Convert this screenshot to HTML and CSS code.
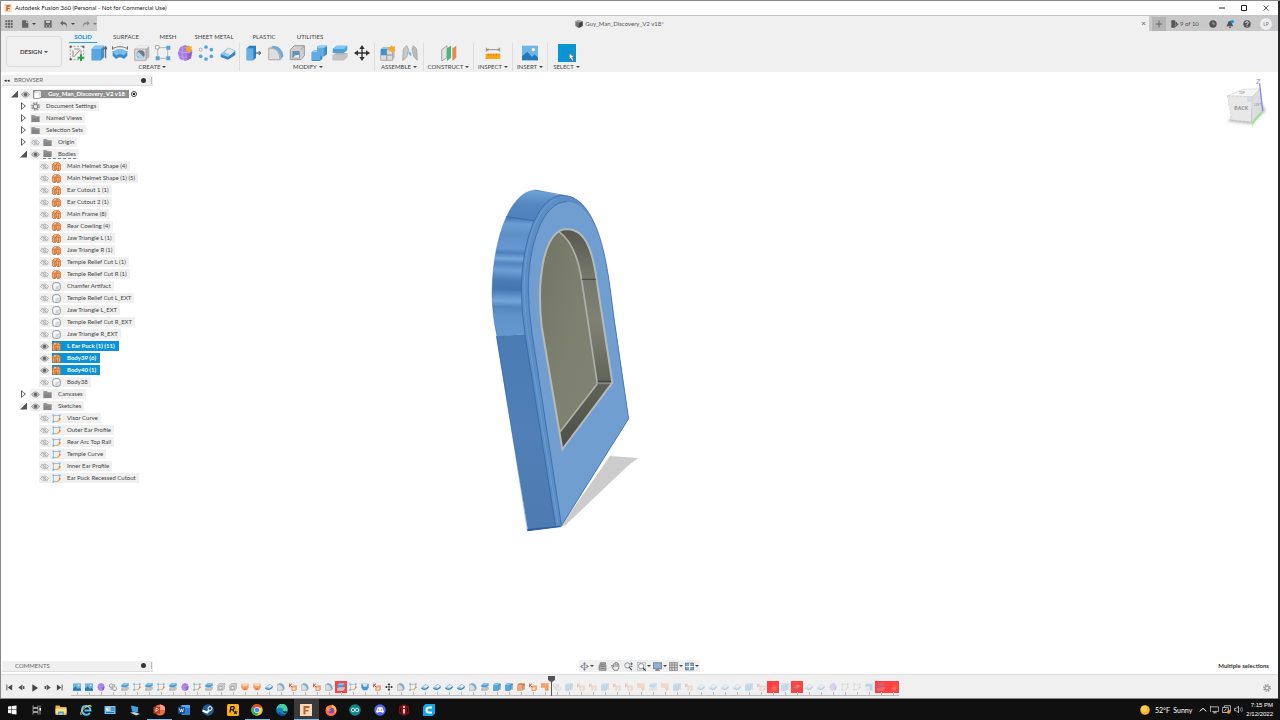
FILE: index.html
```html
<!DOCTYPE html>
<html lang="en">
<head>
<meta charset="utf-8">
<title>Autodesk Fusion 360</title>
<link rel="stylesheet" href="styles.css">
</head>
<body>
<svg class="defs" aria-hidden="true">
<defs>
<symbol id="eye" viewBox="0 0 24 24"><path d="M1 12q11-14 22 0q-11 14-22 0z" fill="#c5c5c5" stroke="#888" stroke-width="2"/><circle cx="12" cy="12" r="4.500" fill="#666"/></symbol>
<symbol id="eyeoff" viewBox="0 0 24 24"><path d="M1 12q11-13 22 0q-11 13-22 0z" fill="#eee" stroke="#aaa" stroke-width="2"/><circle cx="12" cy="12" r="3.500" fill="none" stroke="#aaa" stroke-width="2"/><path d="M3 5l18 14" stroke="#aaa" stroke-width="2"/></symbol>
<symbol id="folder" viewBox="0 0 24 24"><path d="M1 3h9l3 3h10v15H1z" fill="#858585"/><path d="M1 8h22" stroke="#b5b5b5" stroke-width="1.500"/></symbol>
<symbol id="gear" viewBox="0 0 24 24"><circle cx="12" cy="12" r="9.500" fill="none" stroke="#888" stroke-width="4" stroke-dasharray="4 3.460"/><circle cx="12" cy="12" r="6" fill="#eee" stroke="#888" stroke-width="3"/></symbol>
<symbol id="box" viewBox="0 0 24 24"><path d="M2 6l5-4h15v16l-5 5H2z" fill="#fff" stroke="#777" stroke-width="2"/><path d="M3 7h14v15M17 7l5-5" fill="none" stroke="#bbb" stroke-width="1.500"/></symbol>
<symbol id="mesh" viewBox="0 0 24 24"><path d="M6 2h12l5 5v13l-4 3h-5l-2-7-3 7H4l-3-4V7z" fill="#f5a566" stroke="#bb6a30" stroke-width="2"/><path d="M3 8l8 1 3-6M11 9v8M14 9h7M7 10v11M17 10v11" stroke="#a9581f" stroke-width="1.500" fill="none"/><path d="M5 5l5-1M14 13h3" stroke="#ffe0bd" stroke-width="2"/></symbol>
<symbol id="solid" viewBox="0 0 24 24"><rect x="2" y="2" width="20" height="20" rx="6" fill="#fff" stroke="#858b95" stroke-width="2.500"/><path d="M12 9h8v9l-3 3h-8V12z" fill="#d4d7dc"/></symbol>
<symbol id="sketch" viewBox="0 0 24 24"><path d="M4 4h16v14M4 4v16h10" fill="none" stroke="#8a9aa8" stroke-width="1.600"/><path d="M1 1h5v5H1zM18 1h5v5h-5zM1 18h5v5H1z" fill="#82b9e2"/><path d="M13 22l1-4 7-8 2 3-7 8z" fill="#f5ae32"/><path d="M19 12l2-2 2 3-2 2z" fill="#d95858"/></symbol>
<symbol id="pic" viewBox="0 0 24 24"><path d="M0 1h24v22H0z" fill="#70b5e7"/><circle cx="17" cy="7" r="2.500" fill="#fff3b6"/><path d="M0 17l8-7 7 8 4-4 5 5v4H0z" fill="#2479b8"/></symbol>
<symbol id="form" viewBox="0 0 24 24"><path d="M5 3l7-3 8 3 3 8-2 9-8 4-9-3-3-9z" fill="#a67de0"/><path d="M2 9q10 5 20 0M2 17q10 4 19 0M9 2q-3 10 1 21M18 3q1 10-2 20" stroke="#cbaef2" stroke-width="1" fill="none"/><path d="M16 13l6-3-1 10-6 3z" fill="#7447b8" opacity=".6"/></symbol>
<symbol id="link" viewBox="0 0 24 24"><path d="M1 5l7-3 4 5-3 6-7-1zM10 14l8-4 5 5-2 7-8 1z" fill="#e7e7e7" stroke="#858585" stroke-width="2"/><path d="M12 5h5v4M6 14v5h4" fill="none" stroke="#5c91ba" stroke-width="2"/></symbol>
<symbol id="split" viewBox="0 0 24 24"><path d="M1 6l6-5h16v6l-5 5H1z" fill="#4a9fdd"/><path d="M1 6l6-5h16l-5 5z" fill="#85c4ef"/><path d="M1 15l5-3h17v6l-5 5H1z" fill="#b5b5b5"/><path d="M1 15h17l5-3v6l-5 5H1z" fill="#c4c4c4"/></symbol>
<symbol id="shell" viewBox="0 0 24 24"><path d="M2 7l6-6h15v15l-5 6H2z" fill="#cfcfcf" stroke="#999" stroke-width="1.500"/><path d="M6 10h9v9H6z" fill="#f3f3f3" stroke="#888" stroke-width="2"/><path d="M18 7l5-6" stroke="#888"/></symbol>
<symbol id="patch" viewBox="0 0 24 24"><path d="M1 2h22v12l-5 8H6l-5-8z" fill="#f39c62"/><path d="M3 3h18l-3 7H7z" fill="#ffd8b9"/><path d="M9 15h6v6H9z" fill="#dd8149"/></symbol>
<symbol id="bpatch" viewBox="0 0 24 24"><path d="M1 2h22v12l-5 8H6l-5-8z" fill="#4596d3"/><path d="M4 3h16l-3 8H8z" fill="#d5e4ef"/></symbol>
<symbol id="plane" viewBox="0 0 24 24"><path d="M1 14L13 4l10 5v6L12 22 1 18z" fill="#3c83bd"/><path d="M1 14L13 4l10 5-11 9z" fill="#8cc8ef"/><path d="M7 11l6-6 9 4-7 6z" fill="#e2e8ec"/></symbol>
<symbol id="fillet" viewBox="0 0 24 24"><path d="M1 4l6-3q14 0 16 16l-4 6H1z" fill="#c5c5c5"/><path d="M7 1q14 0 16 16l-4 4q0-15-13-17z" fill="#66ace1"/><path d="M1 5h5q11 1 12 17H1z" fill="#dedede" stroke="#999"/></symbol>
<symbol id="remove" viewBox="0 0 24 24"><path d="M8 11l4-3h11v11l-4 4H8z" fill="#f7a873" stroke="#b98058"/><path d="M11 14h7v6h-7z" fill="#ffdfbf"/><path d="M2 2v11M2 8l7-6M4 7l6 6" stroke="#bb3a30" stroke-width="2.500"/></symbol>
<symbol id="ext" viewBox="0 0 24 24"><path d="M1 6l5-5h14v17l-5 5H1z" fill="#3e91cf"/><path d="M1 6l5-5h14l-5 5z" fill="#8cc7f0"/><path d="M1 6h14v17H1z" fill="#58a7df"/><path d="M22 20V3M19 7l3-5 2 5" fill="none" stroke="#555" stroke-width="1.500"/></symbol>
<symbol id="oext" viewBox="0 0 24 24"><path d="M1 6l5-5h14v17l-5 5H1z" fill="#d98245"/><path d="M1 6h14v17H1z" fill="#f5a775"/><path d="M22 20V3M19 7l3-5 2 5" fill="none" stroke="#555" stroke-width="1.500"/></symbol>
<symbol id="ell" viewBox="0 0 24 24"><path d="M0 1h23v22H12V14H0z" fill="#f79b61"/><path d="M3 14L12 5h11" stroke="#ffb488" stroke-width="2" fill="none"/></symbol>
<symbol id="move" viewBox="0 0 24 24"><path d="M12 2v20M2 12h20" stroke="#333" stroke-width="2"/><path d="M12 0l4 6H8zM12 24l-4-6h8zM0 12l6-4v8zM24 12l-6 4V8z" fill="#333"/></symbol>
<symbol id="scale" viewBox="0 0 24 24"><path d="M1 2h22v21h-9V11H1z" fill="#4b99cc"/><path d="M2 14h9v9H2z" fill="#aac6d8"/></symbol>
<symbol id="newsketch" viewBox="0 0 24 24"><path d="M2 2h20v14M2 2v20h13" fill="none" stroke="#888" stroke-dasharray="3 2"/><path d="M6 18V8M8 6h8M18 8v6M7 18l10-11" stroke="#777" fill="none" stroke-width="1.200"/><path d="M1 1h3v3H1zM20 1h3v3h-3zM1 20h3v3H1z" fill="#555"/><path d="M18 14v10M13 19h10" stroke="#24a34b" stroke-width="3"/></symbol>
<symbol id="revolve" viewBox="0 0 24 24"><path d="M1 9v7l5 5q6-5 12 0l5-5V9z" fill="#378bc9"/><path d="M1 10q11-9 22 0l-5 6q-6-5-12 0z" fill="#79bbea"/><path d="M2 5q10-5 20 0" stroke="#777" fill="none" stroke-width="1.500"/><path d="M1 2v5M23 2v5" stroke="#555" stroke-width="1.500"/></symbol>
<symbol id="hole" viewBox="0 0 24 24"><path d="M1 6l5-5h17v17l-5 5H1z" fill="#b5b5b5"/><path d="M1 6l5-5h17l-5 5z" fill="#eee"/><path d="M1 6h17v17H1z" fill="#dadada" stroke="#999"/><circle cx="10" cy="14" r="6" fill="#777"/><path d="M6 10a6 6 0 0 0 9 8z" fill="#a9d6f2"/></symbol>
<symbol id="pattern" viewBox="0 0 24 24"><path d="M5 4h14v16M4 4v16h15" fill="none" stroke="#999"/><path d="M1 1h5v5H1z" fill="#fff" stroke="#888"/><path d="M17 1h6v6h-6zM1 17h6v6H1zM17 17h6v6h-6z" fill="#55a5dd"/></symbol>
<symbol id="circ" viewBox="0 0 24 24"><g fill="#55a5dd"><circle cx="12" cy="3" r="2.800"/><circle cx="20" cy="7" r="2.800"/><circle cx="20" cy="17" r="2.800"/><circle cx="12" cy="21" r="2.800"/><circle cx="4" cy="17" r="2.800"/></g><circle cx="4" cy="7" r="2.300" fill="#fff" stroke="#888"/></symbol>
<symbol id="press" viewBox="0 0 24 24"><path d="M1 5l4-4h10v18l-4 4H1z" fill="#2d83c0"/><path d="M1 5h10v18H1z" fill="#69b0e2"/><path d="M14 12h8M19 9l3 3-3 3" fill="none" stroke="#444" stroke-width="1.500"/></symbol>
<symbol id="combine" viewBox="0 0 24 24"><path d="M9 3l3-2h12v13l-4 3h-3v4l-4 3H1V11l3-3h5z" fill="#368bcd"/><path d="M9 3l3-2h12l-4 3v13h-6v6H1V11h8z" fill="#5fabdf"/><path d="M9 4l3-3h12l-4 3zM1 11l3-3h5v3z" fill="#9bd0f3"/></symbol>
<symbol id="newcomp" viewBox="0 0 24 24"><path d="M1 7l4-4h17v16l-4 4H1z" fill="#bbb"/><path d="M1 15h9v8H1zM10 15h9v8h-9zM10 7h9v8h-9z" fill="#ddd" stroke="#999"/><path d="M1 6h9v9H1z" fill="#3b91d1"/><path d="M1 6l4-3h9l-4 3z" fill="#8cc7f0"/><path d="M18 0l1 3 4-1-2 4 3 2-4 1-1 3-3-3-3 1 1-4-3-3h4z" fill="#f5a91b"/></symbol>
<symbol id="joint" viewBox="0 0 24 24"><path d="M2 6l5-5 3 6-3 11-5 5H1z" fill="#c9c9c9" stroke="#999"/><path d="M17 1l5 5 1 17-5-5-3-11z" fill="#bdbdbd" stroke="#999"/><path d="M10 9l4 3v5l-4-3z" fill="#7ab8e2"/></symbol>
<symbol id="construct" viewBox="0 0 24 24"><path d="M1 7l8-6v18l-8 5z" fill="#e1e1e1" stroke="#888"/><path d="M9 5l6-4v18l-6 5z" fill="#43b67b"/><path d="M17 5l6-4v18l-6 5z" fill="#e28b55"/></symbol>
<symbol id="inspect" viewBox="0 0 24 24"><path d="M2 4v6M22 4v6M3 7h18M5 5L3 7l2 2M19 5l2 2-2 2" stroke="#666" fill="none"/><path d="M1 13h22v8H1z" fill="#f5a719"/><path d="M5 13v3M9 13v3M13 13v3M17 13v3" stroke="#b88218"/></symbol>
<symbol id="select" viewBox="0 0 24 24"><path d="M0 0h24v24H0z" fill="#0b93d7"/><path d="M3 3h17v14H3z" fill="none" stroke="#19a8ae" stroke-dasharray="2 2"/><path d="M15 12v9l2-2 2 4 2-1-2-4h3z" fill="#fff" stroke="#444" stroke-width=".7"/></symbol>
<symbol id="menu" viewBox="0 0 24 24"><path d="M1 1h6v6H1zM9 1h6v6H9zM17 1h6v6h-6zM1 9h6v6H1zM9 9h6v6H9zM17 9h6v6h-6zM1 17h6v6H1zM9 17h6v6H9zM17 17h6v6h-6z" fill="#666"/></symbol>
<symbol id="file" viewBox="0 0 24 24"><path d="M3 1h12v7h7v15H3zM17 1l5 5h-5z" fill="#666"/></symbol>
<symbol id="save" viewBox="0 0 24 24"><path d="M1 1h22v22H1z" fill="#666"/><path d="M6 2h12v7H6zM6 14h12v8H6z" fill="#c9c9c9"/><path d="M8 15h8v6H8z" fill="#666"/></symbol>
<symbol id="undo" viewBox="0 0 24 24"><path d="M9 2L0 9l9 8v-5q9-1 11 10Q23 6 9 7z" fill="#666"/></symbol>
<symbol id="cube" viewBox="0 0 24 24"><path d="M1 4l9-3 13 3v14l-12 6L1 18z" fill="#777"/><path d="M11 8l12-4v14l-12 6z" fill="#444"/><path d="M1 4l9-3 13 3-12 4z" fill="#aaa"/></symbol>
<symbol id="clock" viewBox="0 0 24 24"><circle cx="12" cy="12" r="11" fill="#555"/><path d="M12 5v7h6" stroke="#ccc" stroke-width="2" fill="none"/></symbol>
<symbol id="bell" viewBox="0 0 24 24"><path d="M12 2q7 1 6 9l4 8H1l4-8q0-8 7-9zM9 20h6v3H9z" fill="#555"/><circle cx="19" cy="5" r="5" fill="#1399df"/></symbol>
<symbol id="help" viewBox="0 0 24 24"><circle cx="12" cy="12" r="11" fill="#555"/><path d="M8 9q0-4 4-4t4 4q0 2-4 4v2M12 17v3" fill="none" stroke="#ddd" stroke-width="3"/></symbol>
<symbol id="docs" viewBox="0 0 24 24"><path d="M1 1h11v22H1zM13 3l9 9-9 9" fill="#555"/><path d="M11 20l9-10 3 3-9 9z" fill="#555" stroke="#ccc"/></symbol>
<symbol id="first" viewBox="0 0 24 24"><path d="M3 2v20" stroke="#444" stroke-width="3"/><path d="M21 2v20L6 12z" fill="#444"/></symbol>
<symbol id="prev" viewBox="0 0 24 24"><path d="M15 2v20L1 12zM17 7h5v10h-5z" fill="#555"/></symbol>
<symbol id="play" viewBox="0 0 24 24"><path d="M4 1v22l17-11z" fill="#444"/></symbol>
<symbol id="orbit" viewBox="0 0 24 24"><path d="M12 0l4 6H8zM12 24l-4-6h8zM0 12l6-4v8zM24 12l-6 4V8z" fill="#778"/><ellipse cx="12" cy="12" rx="8" ry="4" fill="none" stroke="#889" stroke-width="2"/><path d="M12 4v16" stroke="#889" stroke-width="2"/></symbol>
<symbol id="look" viewBox="0 0 24 24"><path d="M3 8h18v14H3zM6 2h14v4H6z" fill="#bbb" stroke="#666" stroke-width="2"/><path d="M6 12h12M6 17h12" stroke="#666" stroke-width="2"/></symbol>
<symbol id="hand" viewBox="0 0 24 24"><path d="M7 14L4 9q-4-1-2 3l6 10h10l3-8V6q-2-2-3 1V3q-3-2-4 0V1q-3-1-3 2v3q-3-4-4 0z" fill="#eee" stroke="#666" stroke-width="2"/><path d="M11 6v7M14 5v8M18 7v6" stroke="#666" stroke-width="1.500"/></symbol>
<symbol id="zoomer" viewBox="0 0 24 24"><circle cx="9" cy="9" r="7" fill="#eaf1f7" stroke="#777" stroke-width="2"/><path d="M14 14l7 8" stroke="#333" stroke-width="3"/><path d="M17 5h7M20 1v8M17 12h6" stroke="#555" stroke-width="2"/></symbol>
<symbol id="fit" viewBox="0 0 24 24"><path d="M1 1h22v22H1z" fill="#e3e7ea" stroke="#888" stroke-width="1.500" stroke-dasharray="4 2"/><circle cx="11" cy="11" r="7" fill="#f7fbff" stroke="#777" stroke-width="2"/><path d="M16 16l7 7" stroke="#333" stroke-width="3"/></symbol>
<symbol id="display" viewBox="0 0 24 24"><path d="M1 2h22v16H1z" fill="#8eb4d6" stroke="#667" stroke-width="2"/><path d="M8 19h8l3 4H5z" fill="#777"/></symbol>
<symbol id="grid" viewBox="0 0 24 24"><path d="M1 1h22v22H1z" fill="#ddd"/><path d="M2 1v22M8 1v22M15 1v22M22 1v22M1 2h22M1 8h22M1 15h22M1 22h22" stroke="#777" stroke-width="2"/></symbol>
<symbol id="views" viewBox="0 0 24 24"><path d="M1 3h22v18H1z" fill="#83abd0" stroke="#567" stroke-width="2"/><path d="M12 3v18M1 12h22" stroke="#fff" stroke-width="2.500"/></symbol>
</defs>
</svg>

<div class="screen">
<div class="app">
<header class="titlebar">
<svg class="i8" viewBox="0 0 24 24"><path d="M1 0h22v24H1z" fill="#f8d3b5"/><path d="M7 4h12v4h-8v4h6v3h-6v6H7z" fill="#b9622b"/></svg>
<span>Autodesk Fusion 360 (Personal - Not for Commercial Use)</span>
<div class="winbtns">
<button aria-label="Minimize"><svg class="i6" viewBox="0 0 12 12"><path d="M0 6h12" stroke="#222" stroke-width="2"/></svg></button>
<button aria-label="Maximize"><svg class="i6" viewBox="0 0 12 12"><path d="M1 1h10v10H1z" fill="none" stroke="#222" stroke-width="2"/></svg></button>
<button aria-label="Close"><svg class="i6" viewBox="0 0 12 12"><path d="M1 1l10 10M11 1L1 11" stroke="#222" stroke-width="1.500"/></svg></button>
</div>
</header>

<div class="docbar">
<div class="quick">
<button aria-label="Data panel"><svg class="i8"><use href="#menu"/></svg></button>
<button class="car" aria-label="File"><svg class="i8"><use href="#file"/></svg></button>
<button aria-label="Save"><svg class="i8"><use href="#save"/></svg></button>
<button class="car" aria-label="Undo"><svg class="i8"><use href="#undo"/></svg></button>
<button class="car dim" aria-label="Redo"><svg class="i8 flip"><use href="#undo"/></svg></button>
</div>
<div class="doctab"><svg class="i8"><use href="#cube"/></svg><span>Guy_Man_Discovery_V2 v18*</span><button class="closetab" aria-label="Close tab">×</button></div>
<div class="docright">
<button class="plus" aria-label="New tab"><svg class="i8" viewBox="0 0 24 24"><path d="M12 2v20M2 12h20" stroke="#666" stroke-width="3"/></svg></button>
<button class="quota"><svg class="i8"><use href="#docs"/></svg>9 of 10</button>
<button aria-label="Jobs"><svg class="i8"><use href="#clock"/></svg></button>
<button aria-label="Notifications"><svg class="i8"><use href="#bell"/></svg></button>
<button aria-label="Help"><svg class="i8"><use href="#help"/></svg></button>
<button class="avatar">LP</button>
</div>
</div>

<div class="ribbon">
<button class="workspace"><span class="drop">DESIGN</span></button>
<div class="tools">
<nav class="tabs">
<button class="on">SOLID</button><button>SURFACE</button><button>MESH</button><button class="wide">SHEET METAL</button><button class="wide">PLASTIC</button><button>UTILITIES</button>
</nav>
<div class="groups">
<section class="group create"><div class="icons"><svg><use href="#newsketch"/></svg><svg><use href="#ext"/></svg><svg><use href="#revolve"/></svg><svg><use href="#hole"/></svg><svg><use href="#pattern"/></svg><svg viewBox="0 0 24 24"><use href="#form"/><path d="M18 0l1 3 4-1-2 4 3 2-4 1-1 3-3-3-3 1 1-4-3-3h4z" fill="#f5a91b"/></svg><svg><use href="#circ"/></svg><svg><use href="#plane"/></svg></div><button class="drop">CREATE</button></section>
<section class="group modify"><div class="icons"><svg><use href="#press"/></svg><svg><use href="#fillet"/></svg><svg viewBox="0 0 24 24"><use href="#shell"/><path d="M6 10h9v9H6z" fill="#4b9cd6"/><path d="M6 19h9v-4h-5z" fill="#eee"/></svg><svg><use href="#combine"/></svg><svg><use href="#split"/></svg><svg><use href="#move"/></svg></div><button class="drop">MODIFY</button></section>
<section class="group assemble"><div class="icons"><svg><use href="#newcomp"/></svg><svg><use href="#joint"/></svg></div><button class="drop">ASSEMBLE</button></section>
<section class="group construct"><div class="icons"><svg><use href="#construct"/></svg></div><button class="drop">CONSTRUCT</button></section>
<section class="group inspect"><div class="icons"><svg><use href="#inspect"/></svg></div><button class="drop">INSPECT</button></section>
<section class="group insert"><div class="icons"><svg><use href="#pic"/></svg></div><button class="drop">INSERT</button></section>
<section class="group select"><div class="icons big"><svg><use href="#select"/></svg></div><button class="drop">SELECT</button></section>
</div>
</div>
</div>

<main class="canvas">
<svg class="model" viewBox="0 0 540 1080">
<defs>
<linearGradient id="side" gradientUnits="userSpaceOnUse" x1="120" y1="30" x2="105" y2="468">
<stop offset="0" stop-color="#6fa2d6"/><stop offset=".1" stop-color="#5486be"/><stop offset=".2" stop-color="#4f82bc"/><stop offset=".23" stop-color="#6b9ed3"/><stop offset=".3" stop-color="#5d90c7"/><stop offset=".4" stop-color="#6598cf"/><stop offset=".43" stop-color="#4d80b9"/><stop offset=".47" stop-color="#78a9dc"/><stop offset=".5" stop-color="#5385be"/><stop offset=".55" stop-color="#6e9fd4"/><stop offset=".62" stop-color="#4a7bb4"/><stop offset=".68" stop-color="#4475ae"/><stop offset=".73" stop-color="#6296ce"/><stop offset=".76" stop-color="#74a6db"/><stop offset=".8" stop-color="#5385bd"/><stop offset=".86" stop-color="#5f93ca"/><stop offset="1" stop-color="#6598ce"/>
</linearGradient>
<linearGradient id="floor" x1="0" y1="0" x2="1" y2="1"><stop offset="0" stop-color="#727565"/><stop offset=".5" stop-color="#7d806f"/><stop offset="1" stop-color="#818472"/></linearGradient>
<linearGradient id="wall" x1="0" y1="0" x2="0" y2="1"><stop offset="0" stop-color="#56584f"/><stop offset=".2" stop-color="#74766a"/><stop offset=".42" stop-color="#7f8273"/><stop offset=".7" stop-color="#5f6256"/><stop offset="1" stop-color="#4d5047"/></linearGradient>
<linearGradient id="lower" x1="0" y1="0" x2="0" y2="1"><stop offset="0" stop-color="#4a7bb3"/><stop offset=".5" stop-color="#5080b7"/><stop offset="1" stop-color="#4b7bb0"/></linearGradient>
</defs>
<path d="M272 1040L420 828l85 6-32 24-187 178z" fill="#ccc"/>
<path d="M196 30C115 35 66 190 66 345q1 65 15 125l85-8 115-414z" fill="url(#side)"/>
<path d="M78 469l90-7 102 577-96 13z" fill="url(#lower)"/>
<path d="M281 46C205 44 155 180 154 330q1 75 12 140l91 570 17-2 202-322-44-302C420 318 415 280 404 228C380 115 337 48 281 46z" fill="#5b8ec5"/>
<path d="M290 65C220 65 175 190 175 330q1 60 11 130l88 574 202-318-46-320C420 318 415 280 404 228C380 125 342 66 290 65z" fill="#719ed0"/>
<g fill="none" stroke="#2d62a6" stroke-width="2">
<path d="M281 46C205 44 155 180 154 330q1 75 12 140l91 570M290 65C220 65 175 190 175 330q1 60 11 130l88 574"/>
<path d="M281 46C337 48 380 115 404 228c11 52 16 90 28 186l44 302-202 322-102 13M196 30l85 16M108 110l84 12"/>
<path d="M196 30C115 35 66 190 66 345q1 65 15 125l91 581" opacity=".55"/>
<path d="M256 58C200 85 162 190 163 330q2 75 10 130l91 570" stroke="#8ab1dd" opacity=".6"/>
</g>
<path d="M172 1047l98-10 5 4-103 13z" fill="#2d619f"/>
<path d="M290 148C350 146 370 225 380 300l47 308-150 200-8-48-54-320C200 300 220 180 270 152z" fill="url(#wall)"/>
<path d="M267 155c35 25 58 80 68 145l47 311-112 145-55-316C200 300 220 185 267 155z" fill="url(#floor)"/>
<path d="M267 155c35 25 58 80 68 145l47 311-112 145M382 611h43" fill="none" stroke="#aeb0aa" stroke-width="5"/>
<path d="M290 148C350 146 370 225 380 300l47 308-150 200-8-48-54-320C200 300 220 180 270 152q10-4 20-4z" fill="none" stroke="#b5b9b8" stroke-width="6"/>
<path d="M335 298h43M383 604h40M382 612h38" stroke="#252b35" stroke-width="2"/>
</svg>

<aside class="browser">
<div class="panelhead"><span class="rew">◂◂</span><span>BROWSER</span><button class="dot" aria-label="Display settings"></button><i></i></div>
<div class="tree">
<div class="row l0"><button class="tog open" aria-label="Collapse"></button><div class="pill"><svg><use href="#eye"/></svg><span class="rootname"><svg><use href="#box"/></svg><b>Guy_Man_Discovery_V2 v18</b></span></div><input type="radio" checked aria-label="Active component"></div>
<div class="row l1"><button class="tog" aria-label="Expand"></button><div class="pill"><svg><use href="#gear"/></svg><span>Document Settings</span></div></div>
<div class="row l1"><button class="tog" aria-label="Expand"></button><div class="pill"><svg><use href="#folder"/></svg><span>Named Views</span></div></div>
<div class="row l1"><button class="tog" aria-label="Expand"></button><div class="pill"><svg><use href="#folder"/></svg><span>Selection Sets</span></div></div>
<div class="row l1"><button class="tog" aria-label="Expand"></button><div class="pill"><svg><use href="#eyeoff"/></svg><svg><use href="#folder"/></svg><span>Origin</span></div></div>
<div class="row l1"><button class="tog open" aria-label="Collapse"></button><div class="pill"><svg><use href="#eye"/></svg><div class="bodies"><svg><use href="#folder"/></svg><span>Bodies</span></div></div></div>
<div class="row l2"><div class="pill"><svg><use href="#eyeoff"/></svg><svg><use href="#mesh"/></svg><span>Main Helmet Shape (4)</span></div></div>
<div class="row l2"><div class="pill"><svg><use href="#eyeoff"/></svg><svg><use href="#mesh"/></svg><span>Main Helmet Shape (1) (5)</span></div></div>
<div class="row l2"><div class="pill"><svg><use href="#eyeoff"/></svg><svg><use href="#mesh"/></svg><span>Ear Cutout 1 (1)</span></div></div>
<div class="row l2"><div class="pill"><svg><use href="#eyeoff"/></svg><svg><use href="#mesh"/></svg><span>Ear Cutout 2 (1)</span></div></div>
<div class="row l2"><div class="pill"><svg><use href="#eyeoff"/></svg><svg><use href="#mesh"/></svg><span>Main Frame (8)</span></div></div>
<div class="row l2"><div class="pill"><svg><use href="#eyeoff"/></svg><svg><use href="#mesh"/></svg><span>Rear Cowling (4)</span></div></div>
<div class="row l2"><div class="pill"><svg><use href="#eyeoff"/></svg><svg><use href="#mesh"/></svg><span>Jaw Triangle L (1)</span></div></div>
<div class="row l2"><div class="pill"><svg><use href="#eyeoff"/></svg><svg><use href="#mesh"/></svg><span>Jaw Triangle R (1)</span></div></div>
<div class="row l2"><div class="pill"><svg><use href="#eyeoff"/></svg><svg><use href="#mesh"/></svg><span>Temple Relief Cut L (1)</span></div></div>
<div class="row l2"><div class="pill"><svg><use href="#eyeoff"/></svg><svg><use href="#mesh"/></svg><span>Temple Relief Cut R (1)</span></div></div>
<div class="row l2"><div class="pill"><svg><use href="#eyeoff"/></svg><svg><use href="#solid"/></svg><span>Chamfer Artifact</span></div></div>
<div class="row l2"><div class="pill"><svg><use href="#eyeoff"/></svg><svg><use href="#solid"/></svg><span>Temple Relief Cut L_EXT</span></div></div>
<div class="row l2"><div class="pill"><svg><use href="#eyeoff"/></svg><svg><use href="#solid"/></svg><span>Jaw Triangle L_EXT</span></div></div>
<div class="row l2"><div class="pill"><svg><use href="#eyeoff"/></svg><svg><use href="#solid"/></svg><span>Temple Relief Cut R_EXT</span></div></div>
<div class="row l2"><div class="pill"><svg><use href="#eyeoff"/></svg><svg><use href="#solid"/></svg><span>Jaw Triangle R_EXT</span></div></div>
<div class="row l2"><div class="pill sel"><svg><use href="#eye"/></svg><span class="hit"><svg><use href="#mesh"/></svg><b>L Ear Puck (1) (11)</b></span></div></div>
<div class="row l2"><div class="pill sel"><svg><use href="#eye"/></svg><span class="hit"><svg><use href="#mesh"/></svg><b>Body39 (6)</b></span></div></div>
<div class="row l2"><div class="pill sel"><svg><use href="#eye"/></svg><span class="hit"><svg><use href="#mesh"/></svg><b>Body40 (1)</b></span></div></div>
<div class="row l2"><div class="pill"><svg><use href="#eyeoff"/></svg><svg><use href="#solid"/></svg><span>Body38</span></div></div>
<div class="row l1"><button class="tog" aria-label="Expand"></button><div class="pill"><svg><use href="#eye"/></svg><svg><use href="#folder"/></svg><span>Canvases</span></div></div>
<div class="row l1"><button class="tog open" aria-label="Collapse"></button><div class="pill"><svg><use href="#eye"/></svg><svg><use href="#folder"/></svg><span>Sketches</span></div></div>
<div class="row l2"><div class="pill"><svg><use href="#eyeoff"/></svg><svg><use href="#sketch"/></svg><span>Visor Curve</span></div></div>
<div class="row l2"><div class="pill"><svg><use href="#eyeoff"/></svg><svg><use href="#sketch"/></svg><span>Outer Ear Profile</span></div></div>
<div class="row l2"><div class="pill"><svg><use href="#eyeoff"/></svg><svg><use href="#sketch"/></svg><span>Rear Arc Top Rail</span></div></div>
<div class="row l2"><div class="pill"><svg><use href="#eyeoff"/></svg><svg><use href="#sketch"/></svg><span>Temple Curve</span></div></div>
<div class="row l2"><div class="pill"><svg><use href="#eyeoff"/></svg><svg><use href="#sketch"/></svg><span>Inner Ear Profile</span></div></div>
<div class="row l2"><div class="pill"><svg><use href="#eyeoff"/></svg><svg><use href="#sketch"/></svg><span>Ear Puck Recessed Cutout</span></div></div>
</div>
</aside>

<svg class="viewcube" viewBox="0 0 132 156">
<defs><filter id="soft"><feGaussianBlur stdDeviation="4"/></filter></defs>
<path d="M10 130l70 8 45-40-10-20-80 30z" fill="#bbb" filter="url(#soft)"/>
<path d="M10 54l46-20 53-2-24 24z" fill="#f6f6f6" stroke="#aaa"/>
<path d="M10 54l75 2-3 76-59-6z" fill="#e8e8e8" stroke="#aaa" stroke-dasharray="8 4"/>
<path d="M85 56l24-24 8 64-35 36z" fill="#ddd" stroke="#aaa" stroke-dasharray="8 4"/>
<path d="M68 55h17v16H69z" fill="#d5dbe4"/>
<path d="M107 18l9 82" stroke="#8b8bea" stroke-width="4"/><path d="M116 100l-32 38" stroke="#8ee88e" stroke-width="5"/>
<text x="31" y="97" class="face">BACK</text><text x="96" y="19" class="axis">Z</text><text x="45" y="48" class="tiny">TOP</text><text x="91" y="84" class="tiny">LEFT</text><text x="80" y="147" class="yaxis">Y</text>
</svg>

<footer class="status">
<div class="panelhead comments"><span>COMMENTS</span><button class="dot" aria-label="Add comment"></button><i></i></div>
<div class="navbar">
<button class="car" aria-label="Orbit"><svg class="i9"><use href="#orbit"/></svg></button><button aria-label="Look at"><svg class="i9"><use href="#look"/></svg></button><button aria-label="Pan"><svg class="i9"><use href="#hand"/></svg></button><button aria-label="Zoom"><svg class="i9"><use href="#zoomer"/></svg></button><button class="car" aria-label="Fit"><svg class="i9"><use href="#fit"/></svg></button><button class="car" aria-label="Display settings"><svg class="i9"><use href="#display"/></svg></button><button class="car" aria-label="Grid"><svg class="i9"><use href="#grid"/></svg></button><button class="car" aria-label="Viewports"><svg class="i9"><use href="#views"/></svg></button>
</div>
<b class="selinfo">Multiple selections</b>
</footer>
</main>

<div class="timeline">
<div class="playback"><button aria-label="Start"><svg class="i7"><use href="#first"/></svg></button><button aria-label="Step back"><svg class="i7"><use href="#prev"/></svg></button><button aria-label="Play"><svg class="i8"><use href="#play"/></svg></button><button aria-label="Step forward"><svg class="i7 flip"><use href="#prev"/></svg></button><button aria-label="End"><svg class="i7 flip"><use href="#first"/></svg></button></div>
<div class="track">
<i><svg><use href="#pic"/></svg></i><i><svg><use href="#pic"/></svg></i><i><svg><use href="#form"/></svg></i><i><svg><use href="#link"/></svg></i><i><svg><use href="#split"/></svg></i><i><svg><use href="#sketch"/></svg></i><i><svg><use href="#split"/></svg></i><i><svg><use href="#sketch"/></svg></i><i><svg><use href="#split"/></svg></i><i><svg><use href="#form"/></svg></i>
<i><svg><use href="#sketch"/></svg></i><i><svg><use href="#split"/></svg></i><i><svg><use href="#shell"/></svg></i><i><svg><use href="#shell"/></svg></i><i><svg><use href="#patch"/></svg></i><i><svg><use href="#patch"/></svg></i><i><svg><use href="#plane"/></svg></i><i><svg><use href="#fillet"/></svg></i><i><svg><use href="#remove"/></svg></i><i><svg><use href="#fillet"/></svg></i>
<i><svg><use href="#remove"/></svg></i><i><svg><use href="#fillet"/></svg></i><i class="err"><svg><use href="#split"/></svg></i><i><svg><use href="#sketch"/></svg></i><i><svg><use href="#bpatch"/></svg></i><i><svg><use href="#remove"/></svg></i><i><svg><use href="#move"/></svg></i><i><svg><use href="#fillet"/></svg></i><i><svg><use href="#sketch"/></svg></i><i><svg><use href="#plane"/></svg></i>
<i><svg><use href="#plane"/></svg></i><i><svg><use href="#plane"/></svg></i><i><svg><use href="#plane"/></svg></i><i><svg><use href="#fillet"/></svg></i><i><svg><use href="#split"/></svg></i><i><svg><use href="#ext"/></svg></i><i><svg><use href="#ext"/></svg></i><i><svg><use href="#oext"/></svg></i><i><svg><use href="#remove"/></svg></i><i class="now"><svg><use href="#ell"/></svg></i>
<i class="off"><svg><use href="#link"/></svg></i><i class="off"><svg><use href="#ext"/></svg></i><i class="off"><svg><use href="#remove"/></svg></i><i class="off"><svg><use href="#remove"/></svg></i><i class="off"><svg><use href="#ext"/></svg></i><i class="off"><svg><use href="#remove"/></svg></i><i class="off"><svg><use href="#remove"/></svg></i><i class="off"><svg><use href="#ell"/></svg></i><i class="off"><svg><use href="#split"/></svg></i><i class="off"><svg><use href="#ell"/></svg></i>
<i class="off"><svg><use href="#ext"/></svg></i><i class="off"><svg><use href="#remove"/></svg></i><i class="off"><svg><use href="#plane"/></svg></i><i class="off"><svg><use href="#plane"/></svg></i><i class="off"><svg><use href="#plane"/></svg></i><i class="off"><svg><use href="#plane"/></svg></i><i class="off"><svg><use href="#ext"/></svg></i><i class="off"><svg><use href="#remove"/></svg></i><i class="off err"><svg><use href="#remove"/></svg></i><i class="off"><svg><use href="#ext"/></svg></i>
<i class="off err"><svg><use href="#plane"/></svg></i><i class="off"><svg><use href="#plane"/></svg></i><i class="off"><svg><use href="#plane"/></svg></i><i class="off"><svg><use href="#form"/></svg></i><i class="off"><svg><use href="#sketch"/></svg></i><i class="off"><svg><use href="#sketch"/></svg></i><i class="off"><svg><use href="#scale"/></svg></i><i class="off err"><svg><use href="#split"/></svg></i><i class="off err"><svg><use href="#remove"/></svg></i>
</div>
<button class="settings" aria-label="Timeline settings"><svg class="i8"><use href="#gear"/></svg></button>
</div>
</div>

<div class="taskbar">
<div class="apps">
<button aria-label="Start"><svg viewBox="0 0 24 24"><path d="M4 5l7-1v7H4zM12 4l9-1v8h-9zM4 12h7v7l-7-1zM12 12h9v9l-9-1z" fill="#fff"/></svg></button>
<button aria-label="Task view"><svg viewBox="0 0 24 24"><path d="M4 3v4h10V3M4 21v-4h10v4M4 9h10v6H4zM18 3v18" fill="none" stroke="#ccc" stroke-width="1.500"/><path d="M17 8h3v5h-3z" fill="#fff"/></svg></button>
<button aria-label="Explorer"><svg viewBox="0 0 24 24"><path d="M1 3h8l2 3h12v16H1z" fill="#e8b13a"/><path d="M1 9h22v10H1z" fill="#ffe08a"/><path d="M6 15h12v7h-3v-4H9v4H6z" fill="#4aa4df"/></svg></button>
<button aria-label="Internet Explorer"><svg viewBox="0 0 24 24"><path d="M20 18q-4 5-10 3Q4 19 4 12t7-8q9-1 10 9H9" fill="none" stroke="#50c4f2" stroke-width="4"/><path d="M2 22Q-2 13 18 3q5-2 4 3" fill="none" stroke="#f4cb3c" stroke-width="2"/></svg></button>
<button aria-label="Control panel"><svg viewBox="0 0 24 24"><path d="M1 4h22v16H1z" fill="#6fc2ee"/><circle cx="8" cy="10" r="4" fill="#e9f7ff"/><path d="M14 8h7M14 12h7M4 17h16" stroke="#256e9f" stroke-width="2"/><path d="M8 6v4h4" fill="none" stroke="#ef9b30" stroke-width="2"/></svg></button>
<button aria-label="Remote desktop"><svg viewBox="0 0 24 24"><path d="M4 3l14 3v11L6 15z" fill="#35a4e2"/><path d="M2 17l9-1 11 4-8 3z" fill="#c8d1d8"/></svg></button>
<button class="run" aria-label="PowerPoint"><svg viewBox="0 0 24 24"><circle cx="14" cy="12" r="11" fill="#e76d4a"/><path d="M14 1v11h11A11 11 0 0 0 14 1z" fill="#ff9a78"/><path d="M1 6h13v13H1z" fill="#bd3b20"/><path d="M6 16V9h3q3 2 0 4H6" stroke="#fff" stroke-width="1.500" fill="none"/></svg></button>
<button aria-label="Word"><svg viewBox="0 0 24 24"><path d="M7 2h17v20H7z" fill="#2e7dd1"/><path d="M7 2h17v6H7z" fill="#51a9ed"/><path d="M0 6h14v13H0z" fill="#174f9c"/><path d="M3 9l2 7 2-6 2 6 2-7" stroke="#fff" stroke-width="1.500" fill="none"/></svg></button>
<button aria-label="Steam"><svg viewBox="0 0 24 24"><circle cx="12" cy="12" r="11.500" fill="#245b91"/><path d="M1 13l9 4 7-7" stroke="#fff" stroke-width="4" fill="none"/><circle cx="16" cy="9" r="4" fill="#245b91" stroke="#fff" stroke-width="2"/></svg></button>
<button aria-label="Rockstar"><svg viewBox="0 0 24 24"><rect x="0" y="0" width="24" height="24" rx="3" fill="#fcaf17"/><path d="M6 17L8 5h5q4 3-1 6H8M12 11l1 4" stroke="#111" stroke-width="2.500" fill="none"/><path d="M17 12l1 3h4l-3 2 1 4-3-2-3 2 1-4-3-2h4z" fill="#111"/></svg></button>
<button class="run" aria-label="Chrome"><svg viewBox="0 0 24 24"><circle cx="12" cy="12" r="11.500" fill="#f9c52d"/><path d="M2 6a11.500 11.500 0 0 1 20 1H12l-5 8z" fill="#e94335"/><path d="M2 6a11.500 11.500 0 0 0 10 17l5-8-5-2z" fill="#34a853"/><circle cx="12" cy="12" r="5.500" fill="#4285f4" stroke="#fff" stroke-width="1.500"/></svg></button>
<button aria-label="Edge"><svg viewBox="0 0 24 24"><circle cx="12" cy="12" r="11.500" fill="#1583c5"/><path d="M1 10a11 11 0 0 1 22 1q0 5-6 5-4-1-2-4-5-9-14-2z" fill="#45cf9f"/><path d="M7 15q2 6 12 6-8 6-15-2z" fill="#0b4d91"/><path d="M14 12q-1 4 8 3l-2 3q-8 0-6-6z" fill="#111"/></svg></button>
<button class="run active" aria-label="Fusion 360"><svg viewBox="0 0 24 24"><path d="M0 0h24v24H0z" fill="#f8d8bd"/><path d="M7 4h12v4h-8v4h6v3h-6v6H7z" fill="#b9622b"/></svg></button>
<button aria-label="Firefox"><svg viewBox="0 0 24 24"><circle cx="12" cy="13" r="11" fill="#ff7139"/><path d="M14 1q9 4 9 12 0 4-3 6 0-11-8-12z" fill="#ffbd2e"/><circle cx="12" cy="13" r="6" fill="#7b42dc"/><path d="M2 8l4-4q0 4 6 4l-4 4 4 2-6 1z" fill="#ff9838"/></svg></button>
<button aria-label="Arduino"><svg viewBox="0 0 24 24"><circle cx="12" cy="12" r="11.500" fill="#12898c"/><circle cx="8" cy="12" r="3.500" fill="none" stroke="#fff" stroke-width="1.500"/><circle cx="16" cy="12" r="3.500" fill="none" stroke="#fff" stroke-width="1.500"/></svg></button>
<button aria-label="Discord"><svg viewBox="0 0 24 24"><circle cx="12" cy="12" r="11.500" fill="#5865f2"/><path d="M7 7q5-2 10 0l3 9-4 2-1-2H9l-1 2-4-2z" fill="#fff"/><circle cx="9" cy="12" r="1.500" fill="#5865f2"/><circle cx="15" cy="12" r="1.500" fill="#5865f2"/></svg></button>
<button aria-label="iRacing"><svg viewBox="0 0 24 24"><path d="M12 0l10 5v14l-10 5-10-5V5z" fill="#7a1218"/><path d="M12 10v9M12 4v4" stroke="#fff" stroke-width="3"/><path d="M5 7v10M19 7v10" stroke="#340508" stroke-width="2"/></svg></button>
<button aria-label="Cura"><svg viewBox="0 0 24 24"><path d="M5 0h19v19l-5 5H0V5z" fill="#12a7e8"/><path d="M18 7h-6q-5 0-5 5t5 5h6" fill="none" stroke="#fff" stroke-width="4"/></svg></button>
</div>
<div class="tray">
<svg class="i10" viewBox="0 0 24 24"><circle cx="12" cy="12" r="11.500" fill="#ffae25"/><circle cx="10" cy="9" r="7" fill="#ffd358"/></svg>
<span class="weather">52°F&nbsp; Sunny</span>
<svg class="i8" viewBox="0 0 24 24"><path d="M2 16l10-9 10 9" stroke="#fff" stroke-width="3" fill="none"/></svg>
<svg class="i9" viewBox="0 0 24 24"><path d="M1 2v17M1 5h22v12H6M8 21h10M13 17v4" stroke="#ddd" stroke-width="2" fill="none"/></svg>
<svg class="i9" viewBox="0 0 24 24"><path d="M6 6V2h17v14h-5M1 7h16v13H1zM5 17l7-7" stroke="#ddd" stroke-width="2" fill="none"/><circle cx="18" cy="18" r="5" fill="#f29522"/></svg>
<svg class="i9" viewBox="0 0 24 24"><path d="M1 9h5l6-6v18l-6-6H1z" fill="none" stroke="#ddd" stroke-width="2"/><path d="M16 8q3 4 0 8M20 5q5 7 0 14" fill="none" stroke="#aaa" stroke-width="2"/></svg>
<div class="time"><span>7:15 PM</span><span>2/12/2022</span></div>
</div>
</div>
</div>
</body>
</html>
```
FILE: styles.css
```css
* { box-sizing: border-box; }
body { margin: 0; background: #101010; font-family: Lato, "Liberation Sans", sans-serif; font-size: 6px; line-height: 8px; color: #444; }
button { border: 0; margin: 0; padding: 0; background: none; color: inherit; font: inherit; display: flex; align-items: center; justify-content: center; }
svg { display: block; flex: none; }
.defs { position: absolute; width: 0; height: 0; }
.i6 { width: 6px; height: 6px; }
.i7 { width: 7px; height: 7px; }
.i8 { width: 8px; height: 8px; }
.i9 { width: 9px; height: 9px; }
.i10 { width: 10px; height: 10px; }
.flip { transform: scaleX(-1); }
.screen { height: 100vh; display: flex; flex-direction: column; }
.app { flex: 1; min-height: 0; display: flex; flex-direction: column; border: solid #888; border-width: 1px 0 0 1px; box-shadow: inset -2px 0 #26282b; padding-right: 2px; }

.titlebar { height: 14px; background: #fff; display: flex; align-items: center; gap: 3px; padding: 0 9px 0 3px; color: #222; }
.winbtns { margin-left: auto; display: flex; gap: 16px; }

.docbar { height: 16px; background: #c9c9c9; display: flex; border-top: 1px solid #c5c5c5; }
.quick { width: 96px; display: flex; align-items: center; gap: 8px; padding-left: 4px; }
.car { gap: 3px; }
.car::after, .drop::after { content: ""; border: solid transparent; border-width: 2px 2px 0; border-top-color: #444; }
.quick .car + .car { margin-left: -1px; }
.dim { opacity: .6; }
.doctab { flex: 1; background: #f0f0f0; display: flex; align-items: center; justify-content: center; gap: 2px; position: relative; padding-right: 7px; color: #555; }
.closetab { position: absolute; right: 3px; top: 3px; font-size: 8px; }
.docright { width: 129px; display: flex; align-items: center; gap: 9px; padding: 0 6px 0 3px; color: #555; }
.plus { width: 14px; height: 14px; background: #b4b4b4; }
.quota { gap: 1px; margin: 0 auto 0 -4px; white-space: nowrap; }
.avatar { width: 12px; height: 12px; border-radius: 50%; background: #eee; font-size: 5px; color: #777; }

.ribbon { height: 41px; background: #f0f0f0; display: flex; padding-left: 5px; }
.workspace { width: 56px; height: 31px; margin-top: 5px; border: 1px solid #dcdcdc; border-radius: 3px; font-weight: bold; }
.drop { display: flex; align-items: center; justify-content: center; gap: 2px; white-space: nowrap; }
.tools { margin-left: 2px; display: flex; flex-direction: column; }
.tabs { height: 12px; display: flex; padding-left: 5px; }
.tabs button { width: 42px; border-bottom: 1px solid transparent; }
.tabs .wide { width: 50px; }
.tabs .on { width: 28px; margin-right: 8px; color: #0b93d7; font-weight: bold; border-color: #2ba2da; }
.groups { display: flex; height: 28px; }
.group { display: flex; flex-direction: column; border-right: 1px solid #ddd; padding: 1px 3px 0; height: 28px; }
.icons { flex: none; height: 18px; display: flex; align-items: center; justify-content: space-between; }
.icons svg { width: 16px; height: 16px; }
.icons:has(svg:only-child) { justify-content: center; }
.icons.big svg { width: 18px; height: 18px; }
.create { width: 176px; padding-left: 5px; }
.modify { width: 135px; padding-left: 6px; padding-right: 4px; }
.assemble { width: 49px; padding: 1px 5px 0; }
.construct { width: 50px; }
.inspect { width: 39px; }
.insert { width: 35px; }
.select { width: 37px; border-right: 0; }
.group .drop { flex: none; height: 9px; }

.canvas { flex: 1; min-height: 0; background: #fff; position: relative; display: flex; flex-direction: column; justify-content: space-between; }
.model { position: absolute; left: 469px; top: 108px; width: 180px; height: 360px; }
.viewcube { position: absolute; right: 10px; top: 6px; width: 44px; height: 52px; }
.face { font: bold 16px Roboto, sans-serif; fill: #999; }
.axis { font: 22px Roboto, sans-serif; fill: #8b8bea; }
.yaxis { font: 16px Roboto, sans-serif; fill: #8ee88e; }
.tiny { font: bold 9px Roboto, sans-serif; fill: #aaa; }
.browser { position: relative; padding: 3px 0 0 1px; width: 153px; }
.panelhead { width: 151px; height: 11px; background: #f0f0f0; display: flex; align-items: center; gap: 5px; padding: 0 1px 0 2px; border: solid #ddd; border-width: 0 0 1px; color: #666; }
.panelhead .dot { width: 5px; height: 5px; border-radius: 50%; background: #333; margin-left: auto; }
.panelhead i { width: 1px; height: 7px; background: #bbb; }
.rew { font-size: 5px; color: #222; width: 5px; display: flex; justify-content: center; }
.tree { padding-top: 2px; }
.row { height: 12px; display: flex; align-items: center; gap: 2px; }
.l0 { padding-left: 8px; }
.l1 { padding-left: 17px; }
.l2 { padding-left: 37px; }
.tog { width: 9px; height: 9px; }
.tog::before { content: ""; width: 5px; height: 8px; background: #555; clip-path: polygon(0 0, 100% 50%, 0 100%, 0 0, 20% 18%, 20% 82%, 75% 50%, 20% 18%); }
.tog.open::before { width: 7px; height: 7px; background: #555; clip-path: polygon(100% 0, 100% 100%, 0 100%); }
.pill { height: 10px; background: #f0f0f0; display: flex; align-items: center; gap: 3px; padding: 0 3px 0 1px; white-space: nowrap; }
.pill svg { width: 9px; height: 9px; }
.pill > svg:has(+ span:not(.rootname, .hit)), .hit svg, .bodies svg { margin-right: 3px; }
.rootname { display: flex; align-items: center; height: 8px; background: #909090; color: #fff; gap: 6px; padding-right: 4px; }
.l0 .pill { padding-right: 0; }
.l0 { gap: 1px; }
.row input { appearance: none; margin: 0 0 0 1px; width: 6px; height: 6px; border-radius: 50%; border: 1px solid #444; background: radial-gradient(#222 35%, #fff 45%); }
.bodies { display: flex; align-items: center; gap: 3px; height: 10px; border-bottom: 1px dashed #789; }
.pill.sel { padding-right: 0; }
.hit { height: 10px; display: flex; align-items: center; gap: 3px; background: #0b93d7; color: #fff; padding-right: 4px; }
.status { position: relative; display: flex; justify-content: space-between; align-items: center; height: 14px; margin-bottom: 1px; padding: 0 9px 0 1px; }
.comments { padding-left: 13px; }
.navbar { height: 12px; background: #f0f0f0; display: flex; align-items: center; gap: 4px; padding: 0 1px; margin-right: 93px; }
.navbar .car { gap: 1px; }
.navbar .car + .car { margin-left: -2px; }
.selinfo { color: #333; }

.timeline { height: 25px; background: #f0f0f0; border-top: 1px solid #ddd; border-bottom: 1px solid #888; display: flex; align-items: flex-start; padding: 6px 7px 0 5px; }
.playback { display: flex; align-items: center; justify-content: space-between; width: 57px; height: 13px; margin-right: 8px; }
.track { display: flex; }
.track i { width: 12px; height: 15px; position: relative; padding: 2px 2px 0; border-bottom: 1px solid #bbb; }
.track i::before { content: ""; position: absolute; left: 6px; bottom: 0; width: 1px; height: 3px; background: #bbb; }
.track svg { width: 8px; height: 8px; position: relative; }
.track .off svg { opacity: .3; }
.track .err { background: linear-gradient(#ff4141 12px, transparent 12px); }
.track .now::after { content: ""; position: absolute; left: 9px; top: -5px; width: 7px; height: 20px; background: #555; clip-path: polygon(0 0, 100% 0, 100% 20%, 57% 30%, 57% 100%, 43% 100%, 43% 30%, 0 20%); z-index: 1; }
.settings { margin-left: auto; height: 13px; }

.taskbar { height: 21px; background: #101010; color: #fff; display: flex; justify-content: space-between; }
.apps { width: 441px; display: grid; grid-template-columns: repeat(18, 1fr); }
.apps svg { width: 12px; height: 12px; }
.run { box-shadow: inset 0 -1px #76b9ed; }
.active { background: #3a3a3a; }
.tray { display: flex; align-items: center; gap: 3px; padding-right: 7px; }
.weather { font-size: 7px; margin: 0 4px 0 2px; }
.time { display: flex; flex-direction: column; align-items: flex-end; font-family: "Liberation Sans", sans-serif; line-height: 9px; }
```
